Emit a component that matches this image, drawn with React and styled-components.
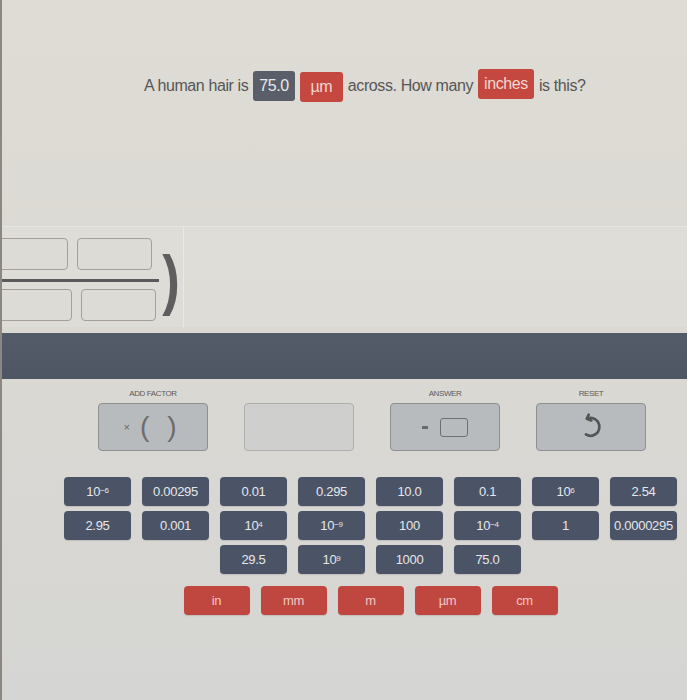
import React from "react";
import styled, { createGlobalStyle } from "styled-components";

const GlobalStyle = createGlobalStyle`
  html, body {
    margin: 0;
    padding: 0;
  }
  body {
    background: #d9d8d3;
    font-family: "Liberation Sans", Arial, sans-serif;
  }
`;

const Page = styled.div`
  width: 687px;
  height: 700px;
  overflow: hidden;
  box-sizing: border-box;
  border-left: 2px solid #8c8780;
  background: linear-gradient(180deg, #dedcd5 0%, #dbd9d3 45%, #d5d5d3 100%);
  color: #555;
`;

const Header = styled.div`
  height: 226px;
  padding: 69px 0 0 142px;
  box-sizing: border-box;
`;

const Question = styled.div`
  display: flex;
  align-items: center;
  gap: 5px;
  height: 34px;
  font-size: 16px;
  letter-spacing: -0.4px;
  color: #565656;
`;

const Chip = styled.span`
  display: inline-flex;
  align-items: center;
  justify-content: center;
  height: 30px;
  padding: 0 6px;
  border-radius: 3px;
  background: ${(p) => (p.$tone === "red" ? "#c4483f" : "#5a5e69")};
  color: ${(p) => (p.$tone === "red" ? "#f3d6cf" : "#e8e8ea")};
  min-width: ${(p) => p.$min || 0}px;
  box-sizing: border-box;
  margin-top: ${(p) => p.$dy || 0}px;
`;

const FractionPanel = styled.div`
  height: 100px;
  display: flex;
  align-items: flex-start;
  background: rgba(255, 255, 255, 0.1);
  border-top: 1px solid rgba(255, 255, 255, 0.25);
`;

const Fraction = styled.div`
  display: flex;
  flex-direction: column;
  width: 157px;
  padding-top: 11px;
`;

const BoxRow = styled.div`
  display: flex;
  gap: 9px;
  margin-left: ${(p) => p.$shift}px;
`;

const Slot = styled.div`
  width: 75px;
  height: 32px;
  box-sizing: border-box;
  border: 1px solid #a69f97;
  border-radius: 4px;
  background: #dddbd5;
`;

const Bar = styled.div`
  height: 3px;
  background: #5a5a5a;
  margin: 9px 0 7px;
`;

const Paren = styled.span`
  font-size: 66px;
  line-height: 1;
  font-weight: bold;
  color: #5e5e5e;
  margin-top: 19px;
  margin-left: 1px;
  transform: scaleX(0.8);
`;

const Divider = styled.div`
  width: 1px;
  align-self: stretch;
  background: rgba(255, 255, 255, 0.35);
  margin-left: 1px;
`;

const Band = styled.div`
  margin-top: 6px;
  height: 46px;
  background: linear-gradient(180deg, #535b69, #4e5664);
`;

const Controls = styled.div`
  display: grid;
  grid-template-columns: repeat(4, 110px);
  column-gap: 36px;
  padding: 10px 0 0 96px;
`;

const Control = styled.div`
  display: flex;
  flex-direction: column;
  align-items: center;
  gap: 4px;
`;

const Label = styled.div`
  font-size: 8px;
  line-height: 10px;
  letter-spacing: -0.4px;
  text-transform: uppercase;
  color: #5a5a5a;
  height: 10px;
`;

const Pad = styled.div`
  width: 110px;
  height: 48px;
  box-sizing: border-box;
  border-radius: 4px;
  border: 1px solid ${(p) => (p.$muted ? "#aeaeac" : "#8d8f91")};
  background: ${(p) => (p.$muted ? "#cfcfcd" : "#b8bbbd")};
  display: flex;
  align-items: center;
  justify-content: center;
  gap: 6px;
  color: #6a6a6a;
`;

const Times = styled.span`
  font-size: 11px;
  margin-right: -2px;
`;

const BigParen = styled.span`
  font-size: 28px;
  line-height: 1;
  color: #6c6c6c;
  margin: 0 6px;
`;

const Dash = styled.span`
  width: 6px;
  height: 3px;
  background: #6a6a6a;
  margin-right: 6px;
`;

const MiniSlot = styled.span`
  width: 28px;
  height: 19px;
  box-sizing: border-box;
  border: 1px solid #6f6f6f;
  border-radius: 3px;
`;

const Keys = styled.div`
  display: flex;
  flex-direction: column;
  gap: 5px;
  padding: 26px 0 0 52px;
`;

const KeyRow = styled.div`
  display: flex;
  justify-content: center;
  gap: 11px;
  margin-top: ${(p) => p.$top || 0}px;
`;

const Key = styled.div`
  min-width: ${(p) => (p.$unit ? 66 : 67)}px;
  height: 29px;
  padding: 0 3px;
  box-sizing: border-box;
  border-radius: 4px;
  display: flex;
  align-items: center;
  justify-content: center;
  font-size: 13px;
  letter-spacing: -0.3px;
  background: ${(p) => (p.$unit ? "#c0473f" : "#4b5467")};
  color: ${(p) => (p.$unit ? "#f1c9c3" : "#e6e7ea")};
  box-shadow: 0 1px 1px rgba(0, 0, 0, 0.12);

  sup {
    font-size: 8px;
    line-height: 0;
    position: relative;
    top: -1px;
  }
`;

const Pow = ({ e }) => (
  <>
    10<sup>{e}</sup>
  </>
);

const rows = [
  [<Pow e="−6" />, "0.00295", "0.01", "0.295", "10.0", "0.1", <Pow e="6" />, "2.54"],
  ["2.95", "0.001", <Pow e="4" />, <Pow e="−9" />, "100", <Pow e="−4" />, "1", "0.0000295"],
  ["29.5", <Pow e="9" />, "1000", "75.0"],
];

const units = ["in", "mm", "m", "µm", "cm"];

function ResetIcon() {
  return (
    <svg width="28" height="28" viewBox="0 0 24 24" fill="none" stroke="#555" strokeWidth="2.3" strokeLinecap="round" strokeLinejoin="round">
      <path d="M8.6 4.9 A7.6 7.6 0 1 1 7.6 18.4" />
      <path d="M12.2 6.4 L8.4 4.9 L10 1.4" />
    </svg>
  );
}

export default function App() {
  return (
    <Page>
      <GlobalStyle />
      <Header>
        <Question>
          A human hair is
          <Chip $min={41}>75.0</Chip>
          <Chip $tone="red" $min={43} $dy={2}>µm</Chip>
          across. How many
          <Chip $tone="red" $dy={-4}>inches</Chip>
          is this?
        </Question>
      </Header>

      <FractionPanel>
        <Fraction>
          <BoxRow $shift={-9}>
            <Slot />
            <Slot />
          </BoxRow>
          <Bar />
          <BoxRow $shift={-5}>
            <Slot />
            <Slot />
          </BoxRow>
        </Fraction>
        <Paren>)</Paren>
        <Divider />
      </FractionPanel>

      <Band />

      <Controls>
        <Control>
          <Label>Add factor</Label>
          <Pad>
            <Times>×</Times>
            <BigParen>(</BigParen>
            <BigParen>)</BigParen>
          </Pad>
        </Control>
        <Control>
          <Label />
          <Pad $muted />
        </Control>
        <Control>
          <Label>Answer</Label>
          <Pad>
            <Dash />
            <MiniSlot />
          </Pad>
        </Control>
        <Control>
          <Label>Reset</Label>
          <Pad>
            <ResetIcon />
          </Pad>
        </Control>
      </Controls>

      <Keys>
        {rows.map((row, i) => (
          <KeyRow key={i}>
            {row.map((v, j) => (
              <Key key={j}>{v}</Key>
            ))}
          </KeyRow>
        ))}
        <KeyRow $top={7}>
          {units.map((u) => (
            <Key key={u} $unit>
              {u}
            </Key>
          ))}
        </KeyRow>
      </Keys>
    </Page>
  );
}
